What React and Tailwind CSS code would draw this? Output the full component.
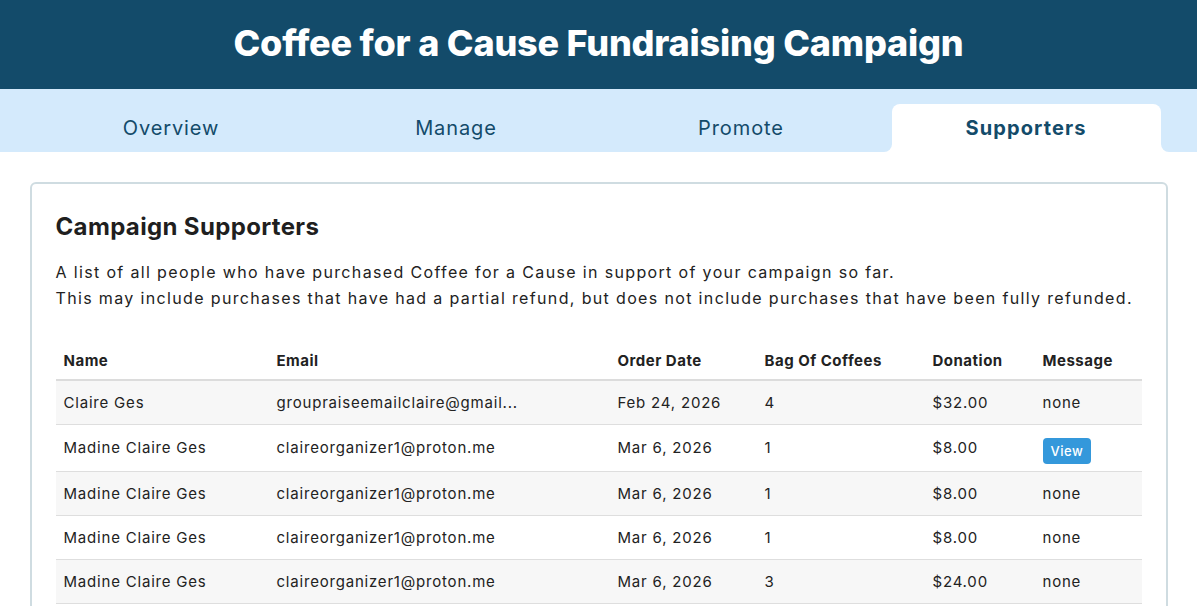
import React from 'react';

const tabs = ['Overview', 'Manage', 'Promote', 'Supporters'];

const supporters = [
  { name: 'Claire Ges', email: 'groupraiseemailclaire@gmail...', date: 'Feb 24, 2026', bags: 4, donation: '$32.00', message: null },
  { name: 'Madine Claire Ges', email: 'claireorganizer1@proton.me', date: 'Mar 6, 2026', bags: 1, donation: '$8.00', message: 'Thanks!' },
  { name: 'Madine Claire Ges', email: 'claireorganizer1@proton.me', date: 'Mar 6, 2026', bags: 1, donation: '$8.00', message: null },
  { name: 'Madine Claire Ges', email: 'claireorganizer1@proton.me', date: 'Mar 6, 2026', bags: 1, donation: '$8.00', message: null },
  { name: 'Madine Claire Ges', email: 'claireorganizer1@proton.me', date: 'Mar 6, 2026', bags: 3, donation: '$24.00', message: null },
];

const App = () => {
  const active = 'Supporters';

  return (
    <div className="min-h-screen bg-white text-[#222]" style={{ fontFamily: 'Inter, "Open Sans", sans-serif' }}>
      <header className="bg-[#134b6a] h-[89px] flex items-center justify-center">
        <h1 className="text-white text-[36px] font-extrabold tracking-[-0.2px] pb-1">Coffee for a Cause Fundraising Campaign</h1>
      </header>

      <nav className="bg-[#d4eafc] h-[63px]">
        <div className="max-w-[1140px] mx-auto flex h-full items-end">
          {tabs.map(tab => (
            <div key={tab} className="flex-1 px-2 h-full flex items-end">
              {tab === active ? (
                <div className="relative w-full h-[48px] bg-white rounded-t-lg flex items-center justify-center text-[20px] font-bold tracking-[1.1px] text-[#134b6a]">
                  {/* little inverted corners where the tab meets the page */}
                  <span className="absolute -left-2 bottom-0 w-2 h-2 bg-white">
                    <span className="block w-full h-full bg-[#d4eafc] rounded-br-lg" />
                  </span>
                  <span className="absolute -right-2 bottom-0 w-2 h-2 bg-white">
                    <span className="block w-full h-full bg-[#d4eafc] rounded-bl-lg" />
                  </span>
                  {tab}
                </div>
              ) : (
                <div className="w-full h-[48px] flex items-center justify-center text-[20px] tracking-[0.9px] text-[#134b6a]">
                  {tab}
                </div>
              )}
            </div>
          ))}
        </div>
      </nav>

      <main className="max-w-[1138px] mx-auto pt-[30px]">
        <div className="border-2 border-[#cfdce1] rounded-md px-6 pt-[27px] pb-6">
          <h2 className="text-[24px] font-bold tracking-[0.35px] text-[#1f1f1f] leading-[32px]">Campaign Supporters</h2>
          <p className="mt-[16px] text-[16px] leading-[26px] tracking-[1.35px] text-[#222]">
            A list of all people who have purchased Coffee for a Cause in support of your campaign so far.
            <br />
            This may include purchases that have had a partial refund, but does not include purchases that have been fully refunded.
          </p>

          <table className="w-full mt-[29px] text-[15px] tracking-[0.8px] border-collapse table-fixed">
            <thead>
              <tr className="border-b-2 border-[#dcdcdc] h-[40px] text-left tracking-[0.5px]">
                <th className="w-[213px] px-2 pt-1 font-bold">Name</th>
                <th className="w-[341px] px-2 pt-1 font-bold">Email</th>
                <th className="w-[147px] px-2 pt-1 font-bold">Order Date</th>
                <th className="w-[168px] px-2 pt-1 font-bold">Bag Of Coffees</th>
                <th className="w-[110px] px-2 pt-1 font-bold">Donation</th>
                <th className="px-2 pt-1 font-bold">Message</th>
              </tr>
            </thead>
            <tbody>
              {supporters.map((s, i) => (
                <tr key={i} className={`border-b border-[#dedede] ${i % 2 === 0 ? 'bg-[#f7f7f7]' : 'bg-white'} ${s.message ? 'h-[47px]' : 'h-[44px]'}`}>
                  <td className="px-2 pt-0.5 truncate">{s.name}</td>
                  <td className="px-2 pt-0.5 truncate">{s.email}</td>
                  <td className="px-2 pt-0.5">{s.date}</td>
                  <td className="px-2 pt-0.5">{s.bags}</td>
                  <td className="px-2 pt-0.5">{s.donation}</td>
                  <td className="px-2 pt-0.5">
                    {s.message ? (
                      <button className="bg-[#3498db] text-white text-[13px] font-medium tracking-[0.5px] rounded px-[8px] h-[26px] leading-[26px] mt-1">View</button>
                    ) : (
                      'none'
                    )}
                  </td>
                </tr>
              ))}
            </tbody>
          </table>
        </div>
      </main>
    </div>
  );
};

export default App;
